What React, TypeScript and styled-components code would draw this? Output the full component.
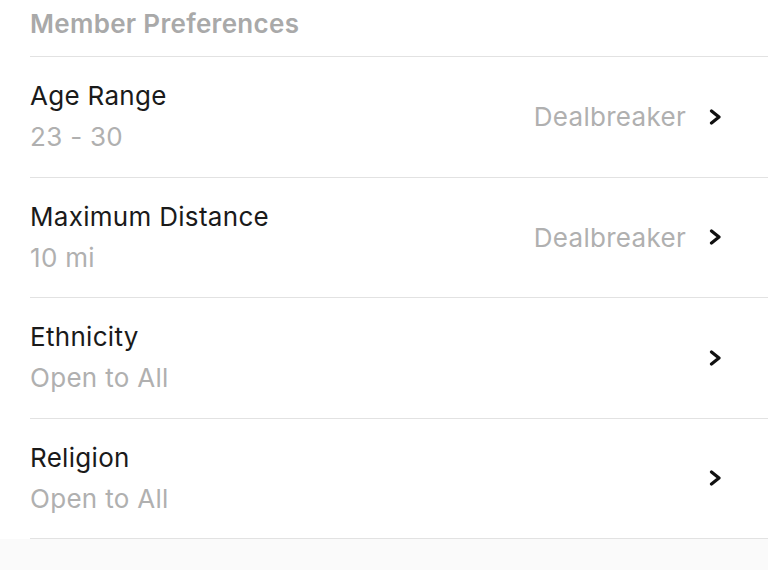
import React from "react";
import styled, { createGlobalStyle } from "styled-components";

const Global = createGlobalStyle`
  html, body { margin: 0; padding: 0; background: #fafafa; }
  body { font-family: Inter, "Noto Sans", sans-serif; -webkit-font-smoothing: antialiased; }
`;

const Page = styled.div`
  background: #ffffff;
  width: 768px;
`;

const Header = styled.div`
  padding: 6px 0 0 30px;
  height: 56px;
  box-sizing: border-box;
  font-size: 26px;
  font-weight: 600;
  letter-spacing: 0.3px;
  color: #a9a9a9;
  line-height: 36px;
`;

const List = styled.div`
  margin-left: 30px;
  border-top: 1px solid #e2e2e2;
`;

const Row = styled.div`
  display: flex;
  align-items: center;
  justify-content: space-between;
  height: 120.5px;
  border-bottom: 1px solid #e2e2e2;
  padding-right: 46px;
  box-sizing: border-box;
`;

const Texts = styled.div`
  display: flex;
  flex-direction: column;
  gap: 5px;
`;

const Title = styled.div`
  font-size: 26px;
  line-height: 36px;
  letter-spacing: 0.3px;
  color: #1a1a1a;
  font-weight: 400;
`;

const Sub = styled.div`
  font-size: 26px;
  line-height: 36px;
  letter-spacing: 0.3px;
  color: #b0b0b0;
`;

const Right = styled.div`
  display: flex;
  align-items: center;
  gap: 23px;
`;

const Tag = styled.span`
  font-size: 26px;
  letter-spacing: 0.3px;
  color: #b0b0b0;
`;

const Chevron = () => (
  <svg width="13" height="16" viewBox="0 0 13 16">
    <polyline points="2.5,2 10,8 2.5,14" fill="none" stroke="#111" strokeWidth="3.2" strokeLinecap="round" strokeLinejoin="round" />
  </svg>
);

const rows = [
  { title: "Age Range", sub: "23 - 30", tag: "Dealbreaker" },
  { title: "Maximum Distance", sub: "10 mi", tag: "Dealbreaker" },
  { title: "Ethnicity", sub: "Open to All" },
  { title: "Religion", sub: "Open to All" },
];

export default function App() {
  return (
    <Page>
      <Global />
      <Header>Member Preferences</Header>
      <List>
        {rows.map((r) => (
          <Row key={r.title}>
            <Texts>
              <Title>{r.title}</Title>
              <Sub>{r.sub}</Sub>
            </Texts>
            <Right>
              {r.tag && <Tag>{r.tag}</Tag>}
              <Chevron />
            </Right>
          </Row>
        ))}
      </List>
    </Page>
  );
}
